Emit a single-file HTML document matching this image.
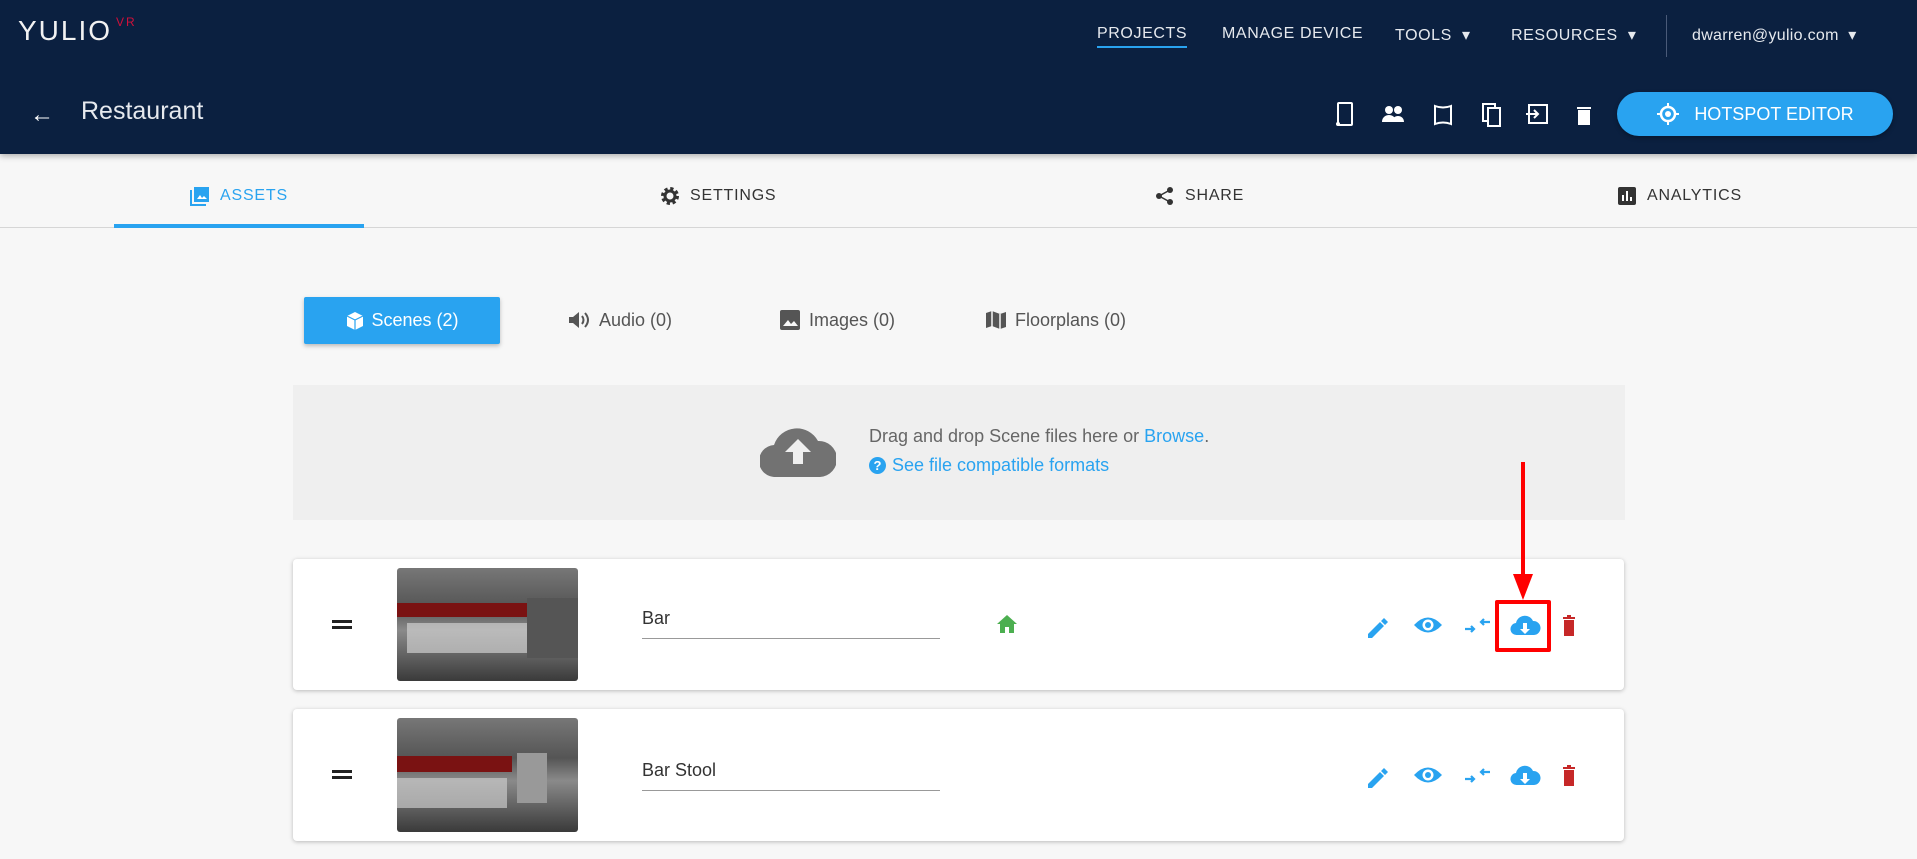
<!DOCTYPE html>
<html><head><meta charset="utf-8"><style>
*{box-sizing:border-box;margin:0;padding:0}
body{width:1917px;height:859px;background:#f7f7f7;font-family:"Liberation Sans",sans-serif;position:relative;overflow:hidden}
.a{position:absolute}
.hdr{left:0;top:0;width:1917px;height:154px;background:#0b2040;box-shadow:0 2px 6px rgba(0,0,0,.3)}
.nav{color:#e6e9ee;font-size:16px;letter-spacing:.6px;top:25px}
.tab{font-size:16px;letter-spacing:.8px;color:#333;top:186px;display:flex;align-items:center;gap:10px}
.sub{font-size:18px;color:#555;top:309px;display:flex;align-items:center;gap:8px}
.card{left:293px;width:1331px;background:#fff;border-radius:4px;box-shadow:0 1px 4px rgba(0,0,0,.25)}
</style></head><body>
<div class="a hdr"></div>
<div class="a" style="left:18px;top:15px;color:#f2f2f2;font-size:28px;letter-spacing:2px">YULIO<sup style="color:#d0103a;font-size:12px;position:relative;top:-4px;margin-left:4px">VR</sup></div>
<div class="a nav" style="left:1097px;border-bottom:2px solid #29a3f0;padding-bottom:3px">PROJECTS</div>
<div class="a nav" style="left:1222px">MANAGE DEVICE</div>
<div class="a nav" style="left:1395px">TOOLS &nbsp;▾</div>
<div class="a nav" style="left:1511px">RESOURCES &nbsp;▾</div>
<div class="a" style="left:1666px;top:15px;width:1px;height:42px;background:#4a5a78"></div>
<div class="a nav" style="left:1692px;letter-spacing:.3px">dwarren@yulio.com &nbsp;▾</div>
<div class="a" style="left:30px;top:101px;color:#fff;font-size:24px">←</div>
<div class="a" style="left:81px;top:97px;color:#e6e9ee;font-size:25px">Restaurant</div>
<svg class="a" style="left:1334px;top:102px" width="260" height="26" fill="#fff">
<rect x="4" y="1" width="14" height="22" rx="1" fill="none" stroke="#fff" stroke-width="2"/><circle cx="4" cy="22" r="2"/>
<circle cx="55" cy="8" r="4"/><circle cx="64" cy="8" r="4"/><path d="M48 20c0-5 4-7 7-7s7 2 7 7zM58 20c0-4 3-6 6-6s6 2 6 6z"/>
<path d="M101 4q8 3 16 0v18q-8-3-16 0z" fill="none" stroke="#fff" stroke-width="2"/>
<rect x="149" y="2" width="12" height="17" fill="none" stroke="#fff" stroke-width="2"/><rect x="154" y="6" width="12" height="18" fill="#0b2040" stroke="#fff" stroke-width="2"/>
<rect x="195" y="3" width="18" height="18" fill="none" stroke="#fff" stroke-width="2"/><path d="M192 12h12M200 8l4 4-4 4" stroke="#fff" stroke-width="2" fill="none"/>
<path d="M243 5h14v2h-14zM244 8h12v15h-12z"/>
</svg>
<div class="a" style="left:1617px;top:92px;width:276px;height:44px;border-radius:22px;background:#29a3f0;box-shadow:0 2px 5px rgba(0,0,0,.3);color:#fff;font-size:18px;display:flex;align-items:center;justify-content:center;gap:14px">
<svg width="24" height="24"><circle cx="12" cy="12" r="7" fill="none" stroke="#fff" stroke-width="2.5"/><circle cx="12" cy="12" r="3" fill="#fff"/><path d="M12 1v4M12 19v4M1 12h4M19 12h4" stroke="#fff" stroke-width="2"/></svg>HOTSPOT EDITOR</div>

<div class="a" style="left:0;top:227px;width:1917px;height:1px;background:#d6d6d6"></div>
<div class="a" style="left:114px;top:224px;width:250px;height:4px;background:#29a3f0"></div>
<div class="a tab" style="left:190px;color:#29a3f0"><svg width="20" height="20"><rect x="4" y="1" width="15" height="15" fill="#29a3f0"/><path d="M1 4v15h15" stroke="#29a3f0" stroke-width="2" fill="none"/><path d="M7 13l3-4 2 3 2-2 3 3z" fill="#fff"/></svg>ASSETS</div>
<div class="a tab" style="left:660px"><svg width="20" height="20"><circle cx="10" cy="10" r="7" fill="none" stroke="#333" stroke-width="4" stroke-dasharray="3 2.5"/><circle cx="10" cy="10" r="5" fill="none" stroke="#333" stroke-width="3"/></svg>SETTINGS</div>
<div class="a tab" style="left:1155px"><svg width="20" height="20"><circle cx="15" cy="4" r="3" fill="#333"/><circle cx="4" cy="10" r="3" fill="#333"/><circle cx="15" cy="16" r="3" fill="#333"/><path d="M15 4L4 10l11 6" stroke="#333" stroke-width="1.5" fill="none"/></svg>SHARE</div>
<div class="a tab" style="left:1617px"><svg width="20" height="20"><rect x="1" y="1" width="18" height="18" rx="2" fill="#333"/><path d="M6 15V9M10 15V5M14 15v-4" stroke="#fff" stroke-width="2"/></svg>ANALYTICS</div>

<div class="a" style="left:304px;top:297px;width:196px;height:47px;background:#29a3f0;border-radius:2px;box-shadow:0 2px 4px rgba(0,0,0,.25);color:#fff;font-size:18px;display:flex;align-items:center;justify-content:center;gap:6px"><svg width="20" height="20"><path d="M10 1l8 4v10l-8 4-8-4V5z" fill="#fff"/><path d="M2 5l8 4 8-4M10 9v10" stroke="#29a3f0" stroke-width="1.2" fill="none"/></svg>Scenes (2)</div>
<div class="a sub" style="left:567px"><svg width="24" height="22"><path d="M2 8h4l6-5v16l-6-5H2z" fill="#555"/><path d="M15 7q3 4 0 8M18 4q6 7 0 14" stroke="#555" stroke-width="2" fill="none"/></svg>Audio (0)</div>
<div class="a sub" style="left:779px"><svg width="22" height="22"><rect x="1" y="1" width="20" height="20" rx="2" fill="#555"/><path d="M4 17l5-6 3 4 3-3 4 5z" fill="#f7f7f7"/></svg>Images (0)</div>
<div class="a sub" style="left:985px"><svg width="22" height="22"><path d="M1 4l6-2 8 3 6-2v15l-6 2-8-3-6 2z" fill="#555"/><path d="M7 2v16M15 5v16" stroke="#f7f7f7" stroke-width="1.5"/></svg>Floorplans (0)</div>

<div class="a" style="left:293px;top:385px;width:1332px;height:135px;background:#efefef"></div>
<svg class="a" style="left:760px;top:425px" width="76" height="52"><path d="M16 52a16 16 0 0 1-2-32A24 24 0 0 1 58 16a18 18 0 0 1 2 36z" fill="#727272"/><path d="M38 14l-13 13h8v12h10V27h8z" fill="#efefef"/></svg>
<div class="a" style="left:869px;top:426px;font-size:18px;color:#666">Drag and drop Scene files here or <span style="color:#29a3f0">Browse</span>.</div>
<div class="a" style="left:869px;top:455px;font-size:18px;color:#29a3f0;display:flex;align-items:center;gap:6px"><span style="display:inline-block;width:17px;height:17px;border-radius:50%;background:#29a3f0;color:#fff;font-size:13px;font-weight:bold;text-align:center;line-height:17px">?</span>See file compatible formats</div>

<div class="a card" style="top:559px;height:131px"></div>
<div class="a card" style="top:709px;height:132px"></div>
<svg width="0" height="0" style="position:absolute"><defs><linearGradient id="g" x1="0" y1="0" x2="0" y2="1"><stop offset="0" stop-color="#777"/><stop offset=".35" stop-color="#555"/><stop offset=".55" stop-color="#8a8a8a"/><stop offset="1" stop-color="#3a3a3a"/></linearGradient></defs></svg>
<div class="a" style="left:332px;top:620px;width:20px;height:3px;background:#222;box-shadow:0 6px 0 #222"></div>
<div class="a" style="left:332px;top:770px;width:20px;height:3px;background:#222;box-shadow:0 6px 0 #222"></div>
<svg class="a" style="left:397px;top:568px" width="181" height="113"><rect width="181" height="113" rx="3" fill="url(#g)"/><rect x="0" y="35" width="135" height="14" fill="#7a1212"/><rect x="10" y="55" width="120" height="30" fill="#cfcfcf" opacity=".7"/><rect x="130" y="30" width="51" height="60" fill="#555"/></svg>
<svg class="a" style="left:397px;top:718px" width="181" height="114"><rect width="181" height="114" rx="3" fill="url(#g)"/><rect x="0" y="38" width="115" height="16" fill="#7a1212"/><rect x="0" y="60" width="110" height="30" fill="#c9c9c9" opacity=".7"/><rect x="120" y="35" width="30" height="50" fill="#999"/></svg>
<div class="a" style="left:642px;top:608px;font-size:18px;color:#333">Bar</div>
<div class="a" style="left:642px;top:638px;width:298px;height:1px;background:#999"></div>
<div class="a" style="left:642px;top:760px;font-size:18px;color:#333">Bar Stool</div>
<div class="a" style="left:642px;top:790px;width:298px;height:1px;background:#999"></div>
<svg class="a" style="left:996px;top:614px" width="22" height="20"><path d="M11 1L1 10h3v9h5v-6h4v6h5v-9h3z" fill="#4caf50"/></svg>

<svg class="a" style="left:1365px;top:612px" width="220" height="28">
<g id="row"><path d="M3 22v4h4L19 14l-4-4zM16 9l4 4 3-3-4-4z" fill="#29a3f0"/>
<path d="M49 13q14-15 28 0q-14 15-28 0z" fill="#29a3f0"/><circle cx="63" cy="13" r="5.5" fill="#fff"/><circle cx="63" cy="13" r="3" fill="#29a3f0"/>
<path d="M100 17h9M106 14l3 3-3 3M125 10h-9M119 7l-3 3 3 3" stroke="#29a3f0" stroke-width="2.2" fill="none"/>
<path d="M152 23a6 6 0 0 1-1-12a9 9 0 0 1 17-2a7 7 0 0 1 1 14z" fill="#29a3f0"/><path d="M158 11v6h-3l5 5 5-5h-3v-6z" fill="#fff"/>
<path d="M198 5h12v2h-12zM202 3h4v2h-4zM199 8h10v16h-10z" fill="#c62828"/></g></svg>
<svg class="a" style="left:1365px;top:762px" width="220" height="28"><use href="#row"/></svg>

<div class="a" style="left:1495px;top:600px;width:56px;height:52px;border:4px solid #f00;border-radius:2px"></div>
<div class="a" style="left:1521px;top:462px;width:4px;height:118px;background:#f00"></div>
<svg class="a" style="left:1513px;top:574px" width="20" height="26"><path d="M0 0h20l-10 26z" fill="#f00"/></svg>
</body></html>
